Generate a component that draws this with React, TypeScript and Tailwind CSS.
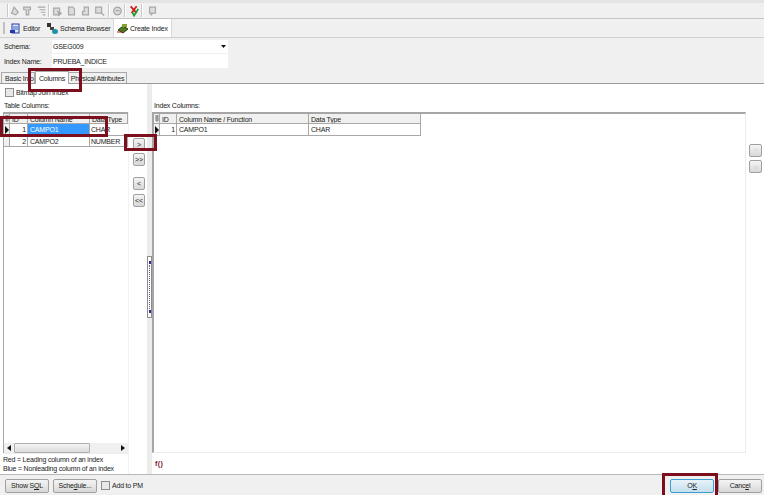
import React from "react";

const GrayIcon = ({ d, className = "" }: { d: string; className?: string }) => (
  <svg width="11" height="12" viewBox="0 0 13 13" className={`shrink-0 -mr-[1px] ${className}`}>
    <path d={d} fill="#dcdcdc" stroke="#a8a8a8" strokeWidth="1.4" />
  </svg>
);

const Sep = ({ className = "" }: { className?: string }) => (
  <div className={`w-[2px] h-[13px] bg-[#c8c8c8] border-r border-white shrink-0 ${className}`} />
);

const Btn = ({ children, className = "" }: { children?: React.ReactNode; className?: string }) => (
  <div className={`flex items-center justify-center rounded-[2px] border border-[#a0a0a0] bg-gradient-to-b from-[#f4f4f4] to-[#d8d8d8] text-[#222] ${className}`}>
    {children}
  </div>
);

const HeaderCell = ({ w, children, grow }: { w?: string; children?: React.ReactNode; grow?: boolean }) => (
  <div className={`${w ?? ""} ${grow ? "grow" : "shrink-0"} h-full pl-[2px] pt-[1px] border-r border-[#a8a8a8] flex items-center overflow-hidden`}>
    {children}
  </div>
);

const Grip = () => (
  <div className="w-[6px] h-full shrink-0 border-r border-[#a8a8a8] flex items-center justify-center">
    <svg width="4" height="7" viewBox="0 0 4 7"><path d="M0 1 H4 M0 3 H4 M0 5 H4 M2 0 V7" stroke="#666" strokeWidth="0.8" /></svg>
  </div>
);

const Arrow = () => (
  <svg width="4" height="8" viewBox="0 0 4 8"><path d="M0 0 L4 4 L0 8 Z" fill="#111" /></svg>
);

const Red = ({ className }: { className: string }) => (
  <div className={`absolute border-[3px] border-[#7b0f1d] pointer-events-none ${className}`} />
);

export default function App() {
  return (
    <div className="relative w-[764px] h-[495px] overflow-hidden bg-white text-[7px] tracking-[-0.2px] leading-none whitespace-nowrap text-[#222] flex flex-col" style={{ fontFamily: '"Liberation Sans", Arial, sans-serif' }}>
      {/* toolbar */}
      <div className="h-[19px] shrink-0 bg-[#f0f0f0] border-t-[3px] border-t-[#e4e4e4] border-b border-b-[#c4c4c4] flex items-center pl-[7px]">
        <Sep />
        <GrayIcon d="M3 9 L6 2 L11 8 L8 11 Z" />
        <GrayIcon className="ml-[3px]" d="M2 2 H10 V5 H8 V11 H5 V5 H2 Z" />
        <GrayIcon className="ml-[4px]" d="M2 2 H11 M4 5 H11 M6 8 H11 M8 11 H11" />
        <Sep className="ml-[2px]" />
        <GrayIcon className="ml-[2px]" d="M2 3 H9 V11 H2 Z M7 7 L11 9 L8 12 Z" />
        <GrayIcon className="ml-[4px]" d="M3 2 H8 L10 4 V11 H3 Z" />
        <GrayIcon className="ml-[4px]" d="M5 2 H10 V11 H3 V7 H5 Z" />
        <GrayIcon className="ml-[4px]" d="M2 2 H9 V9 H2 Z M8 8 L12 12" />
        <Sep className="ml-[4px]" />
        <GrayIcon className="ml-[2px]" d="M6.5 2 A4.5 4.5 0 1 1 6.4 2 Z M4 6 H9" />
        <Sep className="ml-[2px]" />
        <svg width="11" height="12" viewBox="0 0 13 13" className="shrink-0 ml-[3px] -mr-[1px]">
          <path d="M2 1 L9 9 M9 1 L3 9" stroke="#c81818" strokeWidth="2" fill="none" />
          <path d="M4 8 L6 12 L11 4" stroke="#1e9a2c" strokeWidth="2" fill="none" />
        </svg>
        <Sep className="ml-[2px]" />
        <GrayIcon className="ml-[4px]" d="M3 2 H10 V9 H7 L5 11 V9 H3 Z" />
      </div>
      {/* doc tabs */}
      <div className="h-[19px] shrink-0 bg-[#f0f0f0] border-b border-b-[#d0d0d0] flex items-stretch pl-[3px]">
        <div className="w-[2px] my-[3px] mr-[5px] bg-[#c0c0c0]" />
        <div className="w-[37px] flex items-center gap-[2px]">
          <svg width="11" height="11" viewBox="0 0 11 11"><rect x="2" y="1" width="7" height="9" fill="#dfe8f8" stroke="#24389c" /><path d="M3 4 H8 M3 6 H8" stroke="#2c62d8" /><rect x="0" y="7" width="5" height="3" fill="#2338a8" /></svg>
          <span>Editor</span>
        </div>
        <div className="w-[66px] flex items-center gap-[2px]">
          <svg width="11" height="11" viewBox="0 0 11 11"><rect x="0" y="0" width="4" height="4" fill="#333" /><rect x="3" y="4" width="4" height="3" fill="#444" /><ellipse cx="8" cy="8.5" rx="3" ry="2.5" fill="#1f93a8" /></svg>
          <span>Schema Browser</span>
        </div>
        <div className="w-[59px] bg-white flex items-center gap-[1px] pl-[3px] border-x border-x-[#d8d8d8]">
          <svg width="12" height="11" viewBox="0 0 12 11"><path d="M1 7 L6 3 L11 6 L6 10 Z" fill="#4d7a20" stroke="#2c3c10" /><path d="M5 1 H10 V4 H5 Z" fill="#8aa030" /><path d="M0 9 H5" stroke="#b02020" /></svg>
          <span>Create Index</span>
        </div>
      </div>
      {/* fields */}
      <div className="h-[33px] shrink-0 bg-[#f0f0f0] pt-[2px] flex flex-col gap-[1px]">
        <div className="flex items-center h-[13px]">
          <span className="w-[52px] pl-[4px] shrink-0">Schema:</span>
          <div className="w-[176px] h-full bg-white flex items-center pl-[1px] justify-between pr-[2px]">
            <span>GSEG009</span>
            <svg width="5" height="3" viewBox="0 0 5 3"><path d="M0 0 H5 L2.5 3 Z" fill="#111" /></svg>
          </div>
        </div>
        <div className="flex items-center h-[14px]">
          <span className="w-[52px] pl-[4px] shrink-0">Index Name:</span>
          <div className="w-[176px] h-full bg-white flex items-center pl-[1px]">PRUEBA_INDICE</div>
        </div>
      </div>
      {/* sub tabs */}
      <div className="h-[13px] shrink-0 bg-[#f0f0f0] border-b border-b-[#9a9a9a] flex items-end pl-[1px]">
        <div className="h-[11px] w-[34px] pl-[3px] flex items-center bg-[#f0f0f0] border border-b-0 border-[#a8a8a8]">Basic Info</div>
        <div className="h-[13px] w-[34px] -mb-[1px] flex items-center justify-center bg-white border border-b-0 border-[#a8a8a8] relative z-10">Columns</div>
        <div className="h-[11px] w-[58px] flex items-center justify-center bg-[#f0f0f0] border border-b-0 border-l-0 border-[#a8a8a8]">Physical Attributes</div>
      </div>
      {/* main */}
      <div className="flex grow min-h-0">
        {/* left pane */}
        <div className="w-[147px] shrink-0 flex flex-col pl-[3px]">
          <div className="h-[13px] shrink-0 flex items-center gap-[2px] pl-[2px] pt-[4px]">
            <div className="w-[9px] h-[9px] border border-[#8e8e8e] bg-[#e8e8e8]" />
            <span>Bitmap Join Index</span>
          </div>
          <div className="h-[15px] shrink-0 flex items-center pl-[1px] pt-[2px]">Table Columns:</div>
          <div className="flex grow min-h-0">
            <div className="w-[125px] shrink-0 flex flex-col">
              <div className="grow border-t-2 border-l border-[#a6a6a6] flex flex-col min-h-0">
                <div className="h-[10px] shrink-0 bg-[#f0f0f0] border-b border-b-[#a8a8a8] flex">
                  <Grip />
                  <HeaderCell w="w-[18px]">ID</HeaderCell>
                  <HeaderCell w="w-[62px]">Column Name</HeaderCell>
                  <HeaderCell grow>Data Type</HeaderCell>
                </div>
                <div className="h-[12px] shrink-0 border-b border-b-[#a8a8a8] flex">
                  <div className="w-[6px] bg-[#f0f0f0] border-r border-[#a8a8a8] flex items-center justify-center"><Arrow /></div>
                  <div className="w-[18px] border-r border-[#a8a8a8] pr-[1px] flex items-center justify-end">1</div>
                  <div className="w-[62px] bg-[#3399ff] text-white border-r border-[#a8a8a8] flex items-center pl-[2px]">CAMPO1</div>
                  <div className="pl-[1px] flex items-center">CHAR</div>
                </div>
                <div className="h-[11px] shrink-0 border-b border-b-[#a8a8a8] flex">
                  <div className="w-[6px] bg-[#f0f0f0] border-r border-[#a8a8a8]" />
                  <div className="w-[18px] border-r border-[#a8a8a8] pr-[1px] flex items-center justify-end">2</div>
                  <div className="w-[62px] border-r border-[#a8a8a8] flex items-center pl-[2px]">CAMPO2</div>
                  <div className="w-[38px] border-r border-[#a8a8a8] pl-[1px] flex items-center">NUMBER</div>
                </div>
                <div className="grow" />
                <div className="h-[10px] shrink-0 bg-[#f0f0f0] flex items-stretch">
                  <div className="w-[10px] flex items-center justify-center"><svg width="4" height="6" viewBox="0 0 4 6"><path d="M4 0 L0 3 L4 6 Z" fill="#111" /></svg></div>
                  <div className="w-[76px] bg-gradient-to-b from-[#f4f4f4] to-[#dcdcdc] border border-[#b0b0b0] rounded-[1px]" />
                  <div className="grow" />
                  <div className="w-[10px] flex items-center justify-center"><svg width="4" height="6" viewBox="0 0 4 6"><path d="M0 0 L4 3 L0 6 Z" fill="#111" /></svg></div>
                </div>
              </div>
              <div className="h-[21px] shrink-0 flex flex-col justify-center gap-[2px] border-t border-t-[#ececec]">
                <span>Red = Leading column of an index</span>
                <span>Blue = Nonleading column of an index</span>
              </div>
            </div>
            <div className="grow flex flex-col items-start pl-[4px] pt-[26px] border-l border-l-[#f2f2f2]">
              <Btn className="w-[12px] h-[12px]">&gt;</Btn>
              <Btn className="w-[12px] h-[13px] mt-[3px]">&gt;&gt;</Btn>
              <Btn className="w-[12px] h-[13px] mt-[11px]">&lt;</Btn>
              <Btn className="w-[12px] h-[13px] mt-[4px]">&lt;&lt;</Btn>
            </div>
          </div>
        </div>
        {/* splitter */}
        <div className="w-[5px] shrink-0 bg-[#ececec] flex items-center pt-[16px]">
          <div className="w-[5px] h-[62px] bg-white border border-[#8c8c8c] flex flex-col items-center justify-between py-[4px]">
            <div className="w-[2px] h-[3px] bg-[#2a2a9a]" />
            <div className="grow my-[1px] border-l border-dotted border-[#5a5aa0]" />
            <div className="w-[2px] h-[3px] bg-[#2a2a9a]" />
          </div>
        </div>
        {/* right pane */}
        <div className="grow flex flex-col min-w-0">
          <div className="h-[28px] flex items-end pl-[2px] pb-[3px] shrink-0">Index Columns:</div>
          <div className="flex grow min-h-0">
            <div className="w-[594px] shrink-0 flex flex-col">
              <div className="grow border-t-2 border-l-2 border-r border-b border-t-[#a6a6a6] border-l-[#a6a6a6] border-r-[#ececec] border-b-[#ececec] flex flex-col min-h-0">
                <div className="w-[267px] h-[10px] bg-[#f0f0f0] border-b border-b-[#a8a8a8] flex shrink-0">
                  <Grip />
                  <HeaderCell w="w-[17px]">ID</HeaderCell>
                  <HeaderCell w="w-[132px]">Column Name / Function</HeaderCell>
                  <HeaderCell w="w-[112px]">Data Type</HeaderCell>
                </div>
                <div className="w-[267px] h-[12px] border-b border-b-[#a8a8a8] flex shrink-0">
                  <div className="w-[6px] bg-[#f0f0f0] border-r border-[#a8a8a8] flex items-center justify-center"><Arrow /></div>
                  <div className="w-[17px] border-r border-[#a8a8a8] pr-[1px] flex items-center justify-end">1</div>
                  <div className="w-[132px] border-r border-[#a8a8a8] pl-[2px] flex items-center">CAMPO1</div>
                  <div className="w-[112px] border-r border-[#a8a8a8] pl-[2px] flex items-center">CHAR</div>
                </div>
              </div>
              <div className="h-[21px] shrink-0 flex items-center pl-[3px] font-bold tracking-[0.4px] text-[#7b0f1d]">f()</div>
            </div>
            <div className="grow flex flex-col items-start pl-[3px] pt-[32px] gap-[3px]">
              <Btn className="w-[13px] h-[13px]"><span className="text-[#ccc] text-[6px]">^</span></Btn>
              <Btn className="w-[13px] h-[13px]"><span className="text-[#ccc] text-[6px]">v</span></Btn>
            </div>
          </div>
        </div>
      </div>
      {/* bottom bar */}
      <div className="h-[21px] shrink-0 bg-[#f0f0f0] border-t border-t-[#b8b8b8] flex items-center pl-[5px] pr-[2px] pt-[1px]">
        <Btn className="w-[44px] h-[14px]"><span>Show S<u>Q</u>L</span></Btn>
        <Btn className="w-[44px] h-[14px] ml-[4px]"><span>Sche<u>d</u>ule...</span></Btn>
        <div className="w-[9px] h-[9px] ml-[4px] border border-[#8e8e8e] bg-[#e8e8e8]" />
        <span className="ml-[2px]">Add to PM</span>
        <div className="grow" />
        <Btn className="w-[44px] h-[14px] !border-[#3d9fcf] !from-[#e8f3f9] !to-[#c4dfee]"><span>O<u>K</u></span></Btn>
        <Btn className="w-[44px] h-[14px] ml-[4px]"><span>Canc<u>e</u>l</span></Btn>
      </div>
      {/* annotations */}
      <Red className="left-[28px] top-[68px] w-[54px] h-[24px]" />
      <Red className="left-0 top-[116px] w-[108px] h-[21px]" />
      <Red className="left-[124px] top-[134px] w-[33px] h-[17px]" />
      <Red className="left-[662px] top-[473px] w-[56px] h-[22px] !border-b-0" />
    </div>
  );
}
